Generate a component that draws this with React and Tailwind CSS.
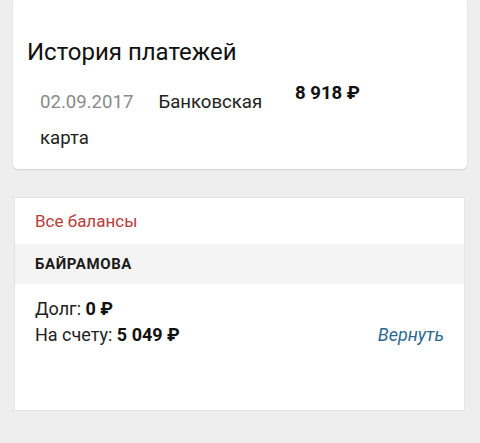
import React from 'react';

const App = () => {
  return (
    <div className="min-h-[443px] bg-[#eeeeee] overflow-hidden font-['Roboto',_'Liberation_Sans',_sans-serif]">
      {/* История платежей */}
      <div className="mx-[13px] w-[454px] bg-white rounded-b-[5px] shadow-[0_1px_2px_rgba(0,0,0,0.12)] pt-[36px] pb-[13px]">
        <h2 className="pl-[14px] text-[24px] leading-[32px] text-[#111111]">История платежей</h2>
        <div className="mt-[16px] pl-[27px] w-[347px] text-[18.6px] leading-[36px] text-[#222222]">
          <span className="float-right font-bold text-[18.6px] leading-[18px] text-[#111111]">8 918 ₽</span>
          <span className="text-[#8a8a8a] mr-[25px]">02.09.2017</span>
          Банковская карта
        </div>
      </div>

      {/* Все балансы */}
      <div className="mt-[28px] mx-[14px] w-[451px] h-[214px] bg-white border border-[#e4e4e4]">
        <div className="pl-[20px] pt-[10px] h-[46px] text-[17px] leading-[26px] text-[#b83c3a]">Все балансы</div>
        <div className="h-[40px] bg-[#f4f4f4] pl-[20px] flex items-center text-[15px] font-bold tracking-[0.6px] text-[#1a1a1a] uppercase">
          Байрамова
        </div>
        <div className="pl-[20px] pr-[20px] pt-[12px] text-[18px] leading-[26px] text-[#222222]">
          <div>
            Долг: <span className="font-bold text-[#111111]">0 ₽</span>
          </div>
          <div className="flex justify-between">
            <span>
              На счету: <span className="font-bold text-[#111111]">5 049 ₽</span>
            </span>
            <button type="button" className="italic text-[#2b6a8f]">Вернуть</button>
          </div>
        </div>
      </div>
    </div>
  );
};

export default App;
